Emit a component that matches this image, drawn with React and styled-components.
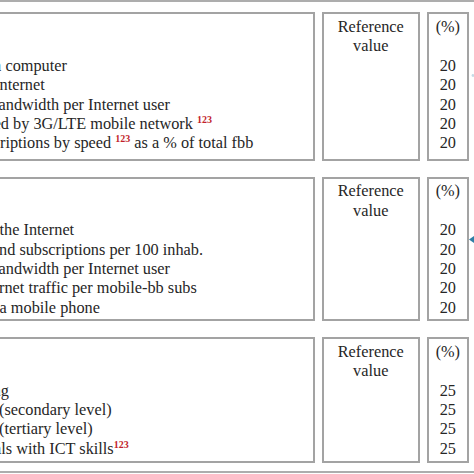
import { createGlobalStyle, styled } from "styled-components";

const GlobalStyle = createGlobalStyle`
  html, body {
    margin: 0;
    padding: 0;
    background: #ffffff;
  }
  body {
    font-family: "Liberation Serif", "Times New Roman", serif;
  }
`;

const Page = styled.div`
  position: relative;
  width: 474px;
  height: 474px;
  overflow: hidden;
  background: #ffffff;
  color: #262626;
  font-size: 16.3px;
`;

const Rule = styled.div`
  height: 2px;
  background: #adadad;
  margin-top: ${(p) => p.$offset || 0}px;
`;

const Stack = styled.div`
  display: flex;
  flex-direction: column;
  gap: 15.8px;
  margin-top: 10.3px;
`;

/* the figure is cropped: the indicator column starts left of the viewport */
const Row = styled.div`
  display: flex;
  align-items: stretch;
  gap: 7px;
  width: 628.7px;
  margin-left: -160px;
`;

const Box = styled.div`
  box-sizing: border-box;
  border: 2px solid #a3a3a3;
  padding: 2.7px 6.5px ${(p) => p.$tail}px;
`;

const IndicatorBox = styled(Box)`
  flex: 1;
  text-align: left;
`;

const RefBox = styled(Box)`
  flex: none;
  width: 98.5px;
  padding-left: 2px;
  padding-right: 2px;
  text-align: center;
`;

const WeightBox = styled(Box)`
  flex: none;
  width: 41.7px;
  padding-left: 2px;
  padding-right: 2px;
  text-align: center;
`;

const Line = styled.div`
  height: 19.4px;
  line-height: 19.4px;
  white-space: nowrap;
`;

const Note = styled.sup`
  font-size: 10px;
  font-weight: bold;
  color: #c21f2c;
  vertical-align: 6.5px;
  line-height: 0;
`;

const Marker = styled.svg`
  position: absolute;
  left: ${(p) => p.$x}px;
  top: ${(p) => p.$y}px;
`;

const sections = [
  {
    title: "ICT access",
    tail: 6.2,
    rows: [
      { pre: "% of households with a computer", w: 20 },
      { pre: "% of households with Internet", w: 20 },
      { pre: "International Internet bandwidth per Internet user", w: 20 },
      { pre: "% of population covered by 3G/LTE mobile network ", note: true, w: 20 },
      {
        pre: "Fixed-broadband subscriptions by speed ",
        note: true,
        post: " as a % of total fbb",
        w: 20,
      },
    ],
  },
  {
    title: "ICT use",
    tail: 2.3,
    rows: [
      { pre: "% of individuals using the Internet", w: 20 },
      { pre: "Active mobile-broadband subscriptions per 100 inhab.", w: 20 },
      { pre: "International Internet bandwidth per Internet user", w: 20 },
      { pre: "Mobile-broadband Internet traffic per mobile-bb subs", w: 20 },
      { pre: "% of individuals using a mobile phone", w: 20 },
    ],
  },
  {
    title: "ICT skills",
    tail: 2.3,
    rows: [
      { pre: "Mean years of schooling", w: 25 },
      { pre: "Gross enrollment ratio (secondary level)", w: 25 },
      { pre: "Gross enrollment ratio (tertiary level)", w: 25 },
      { pre: "Proportion of individuals with ICT skills", note: true, w: 25 },
    ],
  },
];

const Section = ({ title, tail, rows }) => (
  <Row>
    <IndicatorBox $tail={tail}>
      <Line>{title}</Line>
      <Line />
      {rows.map((r, i) => (
        <Line key={i}>
          {r.pre}
          {r.note && <Note>123</Note>}
          {r.post}
        </Line>
      ))}
    </IndicatorBox>
    <RefBox $tail={tail}>
      <Line>Reference</Line>
      <Line>value</Line>
    </RefBox>
    <WeightBox $tail={tail}>
      <Line>(%)</Line>
      <Line />
      {rows.map((r, i) => (
        <Line key={i}>{r.w}</Line>
      ))}
    </WeightBox>
  </Row>
);

const App = () => {
  return (
    <>
      <GlobalStyle />
      <Page>
        <Rule />
        <Stack>
          {sections.map((s) => (
            <Section key={s.title} {...s} />
          ))}
        </Stack>
        <Rule $offset={8.2} />
        <Marker $x={470} $y={73} width="4" height="5" viewBox="0 0 4 5">
          <circle cx="3" cy="2.5" r="1.4" fill="#c4dbe6" />
        </Marker>
        <Marker $x={468} $y={235} width="6" height="9" viewBox="0 0 6 9">
          <path d="M1 4.5 L6 1 L6 8 Z" fill="#2f7fa6" />
        </Marker>
      </Page>
    </>
  );
};

export default App;
